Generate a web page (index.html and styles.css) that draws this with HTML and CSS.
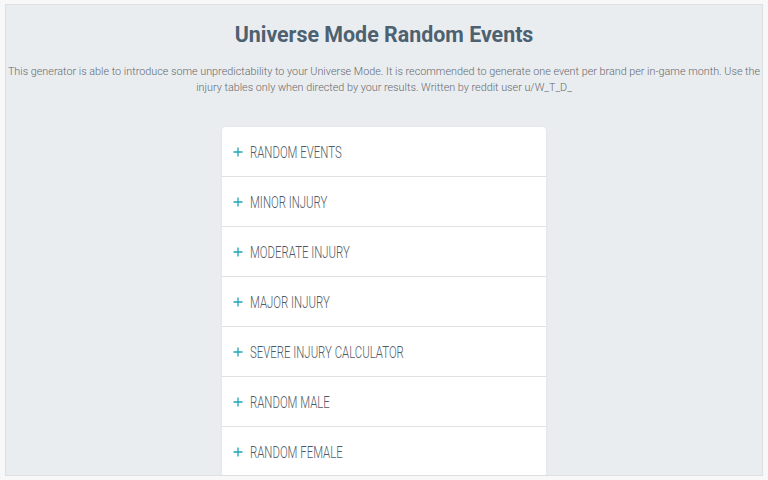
FILE: index.html
```html
<!DOCTYPE html>
<html lang="en">
<head>
    <meta charset="UTF-8">
    <meta name="viewport" content="width=device-width, initial-scale=1.0">
    <title>Universe Mode Random Events</title>
    <link rel="stylesheet" href="styles.css">
</head>
<body>
    <div class="generator">
        <h1>Universe Mode Random Events</h1>
        <p class="intro">This generator is able to introduce some unpredictability to your Universe Mode. It is recommended to generate one event per brand per in-game month. Use the injury tables only when directed by your results. Written by reddit user u/W_T_D_</p>

        <div class="tables">
            <div class="table-row"><svg class="plus" viewBox="0 0 10 10"><path d="M5 0.5V9.5M0.5 5H9.5"/></svg><span class="label">Random Events</span></div>
            <div class="table-row"><svg class="plus" viewBox="0 0 10 10"><path d="M5 0.5V9.5M0.5 5H9.5"/></svg><span class="label">Minor Injury</span></div>
            <div class="table-row"><svg class="plus" viewBox="0 0 10 10"><path d="M5 0.5V9.5M0.5 5H9.5"/></svg><span class="label">Moderate Injury</span></div>
            <div class="table-row"><svg class="plus" viewBox="0 0 10 10"><path d="M5 0.5V9.5M0.5 5H9.5"/></svg><span class="label">Major Injury</span></div>
            <div class="table-row"><svg class="plus" viewBox="0 0 10 10"><path d="M5 0.5V9.5M0.5 5H9.5"/></svg><span class="label">Severe Injury Calculator</span></div>
            <div class="table-row"><svg class="plus" viewBox="0 0 10 10"><path d="M5 0.5V9.5M0.5 5H9.5"/></svg><span class="label">Random Male</span></div>
            <div class="table-row"><svg class="plus" viewBox="0 0 10 10"><path d="M5 0.5V9.5M0.5 5H9.5"/></svg><span class="label">Random Female</span></div>
        </div>
    </div>
</body>
</html>
```

FILE: styles.css
```css
body {
    margin: 0;
    padding: 4px 5px;
    background-color: #f8f8f8;
    font-family: Roboto, "Liberation Sans", sans-serif;
}
.generator {
    height: 472px;
    box-sizing: border-box;
    overflow: hidden;
    background-color: #eaedf0;
    border: 1px solid #dde0e3;
}
.generator h1 {
    margin: 16px 0 0;
    text-align: center;
    font-size: 21.4px;
    font-weight: 700;
    line-height: 28px;
    color: #4d6170;
}
.intro {
    margin: 15px 0 0;
    padding: 0;
    text-align: center;
    font-size: 10.8px;
    font-weight: 300;
    line-height: 16px;
    color: #666a6e;
}
.tables {
    width: 324px;
    margin: 31px auto 0;
    background: white;
    border-radius: 4px;
    box-shadow: 0 0 3px rgba(0, 0, 0, 0.06);
}
.table-row {
    display: flex;
    align-items: center;
    height: 49px;
    padding-left: 11px;
    border-bottom: 1px solid #dfe2e5;
}
.plus {
    width: 10px;
    height: 10px;
    fill: none;
    stroke: #1ca6b8;
    stroke-width: 1.3;
}
.label {
    display: inline-block;
    margin-left: 7px;
    font-size: 17px;
    font-weight: 300;
    text-transform: uppercase;
    color: #4f5b66;
    transform: scaleX(0.67);
    transform-origin: left center;
    white-space: nowrap;
}
```
